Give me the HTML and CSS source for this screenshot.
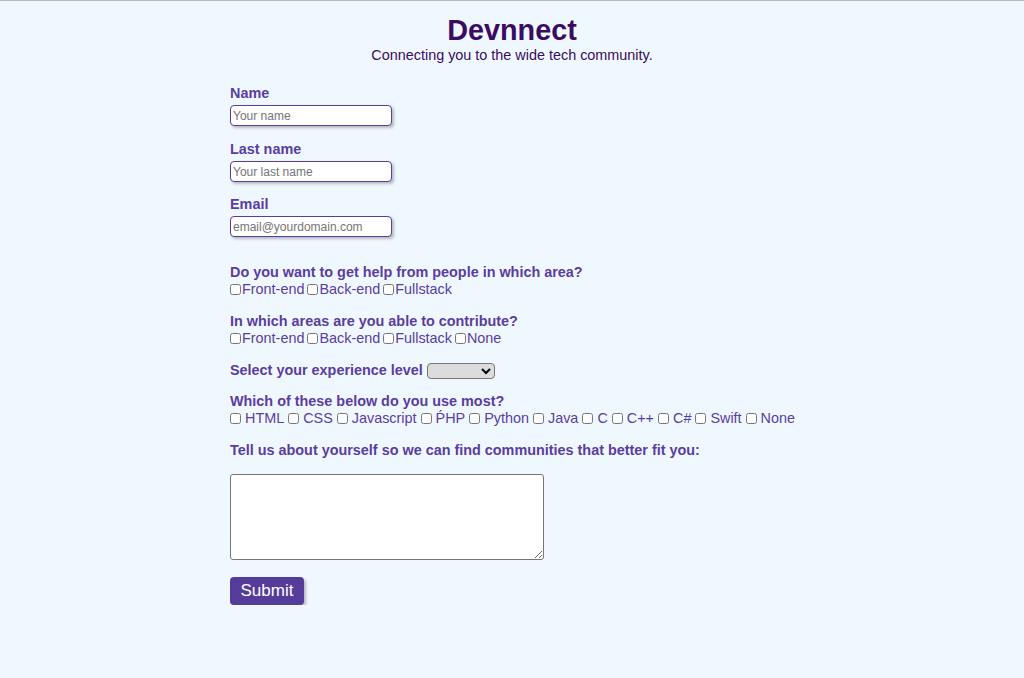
FILE: index.html
```html
<!DOCTYPE html>
<html lang="en">
  <head>
    <meta charset="UTF-8" />
    <meta name="viewport" content="width=device-width, initial-scale=1.0" />
    <title>Devnnect</title>
    <link rel="stylesheet" href="styles.css">
  </head>
  <body>
    <header class="header">
      <h1 class="title">Devnnect</h1>
      <p class="subtitle">Connecting you to the wide tech community.</p>
    </header>

    <form class="signup" onsubmit="return false;">
      <div class="field">
        <label class="label" for="name">Name</label>
        <input class="text-input" type="text" id="name" placeholder="Your name" />
      </div>
      <div class="field">
        <label class="label" for="lastName">Last name</label>
        <input class="text-input" type="text" id="lastName" placeholder="Your last name" />
      </div>
      <div class="field">
        <label class="label" for="email">Email</label>
        <input class="text-input" type="email" id="email" placeholder="email@yourdomain.com" />
      </div>

      <!-- Help area -->
      <div class="group group-first">
        <div class="label">Do you want to get help from people in which area?</div>
        <div class="checks">
          <label class="check"><input type="checkbox" />Front-end</label>
          <label class="check"><input type="checkbox" />Back-end</label>
          <label class="check"><input type="checkbox" />Fullstack</label>
        </div>
      </div>

      <!-- Contribute area -->
      <div class="group">
        <div class="label">In which areas are you able to contribute?</div>
        <div class="checks">
          <label class="check"><input type="checkbox" />Front-end</label>
          <label class="check"><input type="checkbox" />Back-end</label>
          <label class="check"><input type="checkbox" />Fullstack</label>
          <label class="check"><input type="checkbox" />None</label>
        </div>
      </div>

      <div class="group level">
        <label class="label" for="level">Select your experience level</label>
        <select class="level-select" id="level">
          <option></option>
          <option>Beginner</option>
          <option>Intermediate</option>
          <option>Advanced</option>
        </select>
      </div>

      <div class="group">
        <div class="label">Which of these below do you use most?</div>
        <div class="checks langs">
          <label class="check"><input type="checkbox" /> HTML</label>
          <label class="check"><input type="checkbox" /> CSS</label>
          <label class="check"><input type="checkbox" /> Javascript</label>
          <label class="check"><input type="checkbox" /> ṔHP</label>
          <label class="check"><input type="checkbox" /> Python</label>
          <label class="check"><input type="checkbox" /> Java</label>
          <label class="check"><input type="checkbox" /> C</label>
          <label class="check"><input type="checkbox" /> C++</label>
          <label class="check"><input type="checkbox" /> C#</label>
          <label class="check"><input type="checkbox" /> Swift</label>
          <label class="check"><input type="checkbox" /> None</label>
        </div>
      </div>

      <div class="group group-last">
        <label class="label" for="about">Tell us about yourself so we can find communities that better fit you:</label>
        <textarea class="about" id="about"></textarea>
      </div>

      <button class="submit" type="submit">Submit</button>
    </form>
  </body>
</html>
```

FILE: styles.css
```css
/* Base page */
body {
  font-family: "Liberation Sans", Arial, sans-serif;
  margin: 0;
  background-color: #f0f8ff;
  border-top: 1px solid #b8b8b8;
  color: #5a3d9f;
}

/* Header */
.header {
  text-align: center;
  padding-top: 13px;
}

.title {
  margin: 0;
  font-size: 28.8px;
  line-height: 32px;
  color: #3a0c62;
}

.subtitle {
  margin: 0;
  font-size: 14.4px;
  line-height: 18px;
  color: #3a0c62;
}

/* Form */
.signup {
  width: 564px;
  margin: 21px auto 0;
}

.field {
  margin-bottom: 15px;
}

.field:nth-child(2) {
  margin-bottom: 14px;
}

.label {
  display: block;
  font-weight: bold;
  font-size: 14.4px;
  line-height: 17px;
}

.text-input {
  display: block;
  box-sizing: border-box;
  width: 162px;
  height: 21px;
  margin-top: 3px;
  padding: 0 2px;
  font-family: "Liberation Sans", Arial, sans-serif;
  font-size: 12px;
  border: 1px solid #5a3d9f;
  border-radius: 4px;
  background: white;
  box-shadow: 2px 2px 3px rgba(0, 0, 0, 0.25);
}

.text-input::placeholder {
  color: #757575;
}

/* Question groups */
.group {
  margin-bottom: 15px;
}

.group-first {
  margin-top: 27px;
}

.group-last {
  margin-bottom: 17px;
}

.checks {
  display: flex;
  flex-wrap: nowrap;
  white-space: nowrap;
  gap: 0 3px;
  font-size: 14.4px;
  line-height: 17px;
}

.check {
  display: inline-flex;
  align-items: center;
}

.check input {
  width: 11px;
  height: 11px;
  margin: 0 1px 0 0;
}

.langs {
  gap: 0 4px;
}

.langs .check input {
  margin-right: 4px;
}

.level {
  display: flex;
  align-items: center;
  margin-bottom: 14px;
}

.level-select {
  width: 68px;
  height: 16px;
  margin-left: 4px;
  background-color: #dcdcdc;
  border: 1px solid #767676;
  border-radius: 4px;
}

.about {
  display: block;
  box-sizing: border-box;
  width: 314px;
  height: 86px;
  margin-top: 15px;
  border: 1px solid #767676;
  border-radius: 3px;
  background: white;
}

/* Submit */
.submit {
  background-color: #553c9a;
  color: white;
  border: none;
  border-radius: 4px;
  font-family: "Liberation Sans", Arial, sans-serif;
  font-size: 17px;
  width: 74px;
  height: 28px;
  padding: 0;
  box-shadow: 2px 2px 3px rgba(0, 0, 0, 0.25);
  cursor: pointer;
}
```
